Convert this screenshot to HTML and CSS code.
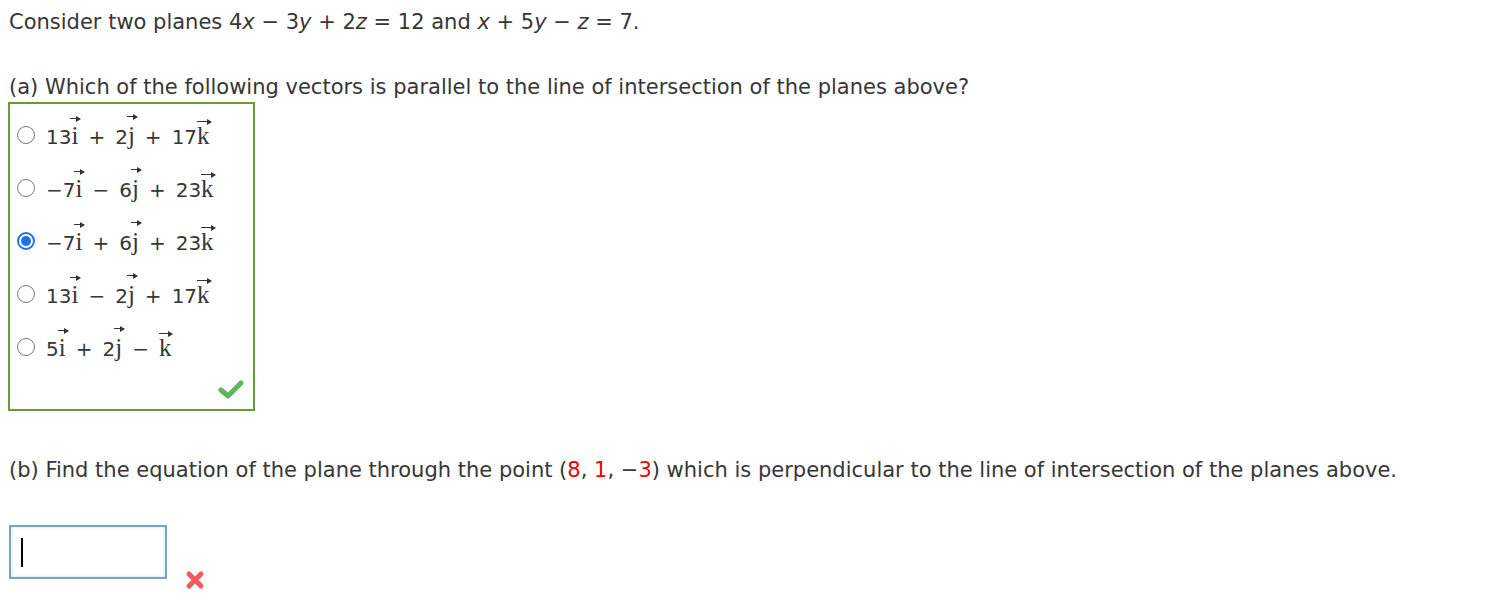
FILE: index.html
```html
<!DOCTYPE html>
<html>
<head>
<meta charset="utf-8">
<link rel="stylesheet" href="styles.css">
</head>
<body>
<div class="page">
  <p class="line intro">Consider two planes 4<i>x</i> − 3<i>y</i> + 2<i>z</i> = 12 and <i>x</i> + 5<i>y</i> − <i>z</i> = 7.</p>
  <p class="line qa">(a) Which of the following vectors is parallel to the line of intersection of the planes above?</p>
  <div class="box">
    <div class="opt"><span class="radio"></span><span class="m">13<span class="v vi">i</span><span class="op">+</span>2<span class="v vj">j</span><span class="op">+</span>17<span class="v vk">k</span></span></div>
    <div class="opt"><span class="radio"></span><span class="m">−7<span class="v vi">i</span><span class="op">−</span>6<span class="v vj">j</span><span class="op">+</span>23<span class="v vk">k</span></span></div>
    <div class="opt"><span class="radio on"></span><span class="m">−7<span class="v vi">i</span><span class="op">+</span>6<span class="v vj">j</span><span class="op">+</span>23<span class="v vk">k</span></span></div>
    <div class="opt"><span class="radio"></span><span class="m">13<span class="v vi">i</span><span class="op">−</span>2<span class="v vj">j</span><span class="op">+</span>17<span class="v vk">k</span></span></div>
    <div class="opt"><span class="radio"></span><span class="m">5<span class="v vi">i</span><span class="op">+</span>2<span class="v vj">j</span><span class="op">−</span><span class="v vk">k</span></span></div>
    <div class="mark">
      <svg width="26" height="20" viewBox="0 0 26 20"><path d="M3 11 L10 17 L23 4" fill="none" stroke="#5cb85c" stroke-width="5" stroke-linecap="round" stroke-linejoin="round"/></svg>
    </div>
  </div>
  <p class="line qb">(b) Find the equation of the plane through the point (<span class="red">8</span>, <span class="red">1</span>, −<span class="red">3</span>) which is perpendicular to the line of intersection of the planes above.</p>
  <div class="answer">
    <div class="input"><span class="caret"></span></div>
    <svg class="cross" width="22" height="22" viewBox="0 0 22 22"><path d="M5 5 L17 17 M17 5 L5 17" stroke="#f25a5f" stroke-width="5" stroke-linecap="round"/></svg>
  </div>
</div>
</body>
</html>
```
FILE: styles.css
```css
html, body { margin: 0; padding: 0; background: #fff; }
.page {
  font-family: "DejaVu Sans", Verdana, sans-serif;
  font-size: 21px;
  color: #363636;
  padding: 10px 0 0 9px;
}
.line { margin: 0; line-height: 24px; white-space: nowrap; }
.line i { font-style: oblique; }
.qa { margin-top: 41px; }
.box {
  margin-top: 3px;
  margin-left: -1px;
  width: 247px;
  height: 309px;
  border: 2px solid #649c3c;
  display: flex;
  flex-direction: column;
  padding-top: 4px;
  box-sizing: border-box;
}
.opt {
  height: 53px;
  display: flex;
  align-items: center;
  gap: 11px;
  padding-left: 7px;
  flex: none;
}
.radio {
  width: 18px; height: 18px;
  border: 1.5px solid #777;
  border-radius: 50%;
  box-sizing: border-box;
  flex: none;
  position: relative;
}
.radio.on { border: 2px solid #1a73e8; }
.radio.on::after {
  content: ""; position: absolute; left: 2px; top: 2px;
  width: 10px; height: 10px; border-radius: 50%; background: #1a73e8;
}
.m { font-size: 20px; padding-top: 4px; white-space: nowrap; }
.op { margin: 0 10px; }
.v {
  font-family: "Liberation Serif", "Times New Roman", serif;
  font-size: 25px;
  position: relative;
  display: inline-block;
  line-height: 24px;
}
.v::before {
  content: "";
  position: absolute; left: -1px; right: -2px; top: -6px;
  border-top: 1.3px solid #333;
}
.v::after {
  content: "";
  position: absolute; right: -3px; top: -8.5px;
  border-left: 5px solid #333;
  border-top: 3px solid transparent;
  border-bottom: 3px solid transparent;
}
.vj::before { top: -8px; }
.vj::after { top: -10.5px; }
.vk::before { top: -3px; left: 0; right: -1px; }
.vk::after { top: -5.5px; right: -2px; }
.mark {
  margin-top: auto;
  display: flex;
  justify-content: flex-end;
  padding: 0 9px 10px 0;
}
.qb { margin-top: 47px; }
.answer {
  margin-top: 43px;
  display: flex;
  align-items: flex-start;
  gap: 17px;
}
.input {
  width: 158px; height: 54px;
  border: 2px solid #79a3c9;
  box-shadow: inset 0 0 3px #c4d9ee;
  display: flex; align-items: center;
  padding-left: 10px;
  box-sizing: border-box;
  flex: none;
}
.caret { width: 2px; height: 29px; background: #000; }
.cross { margin-top: 44px; flex: none; }
.red { color: #e00; }
```
